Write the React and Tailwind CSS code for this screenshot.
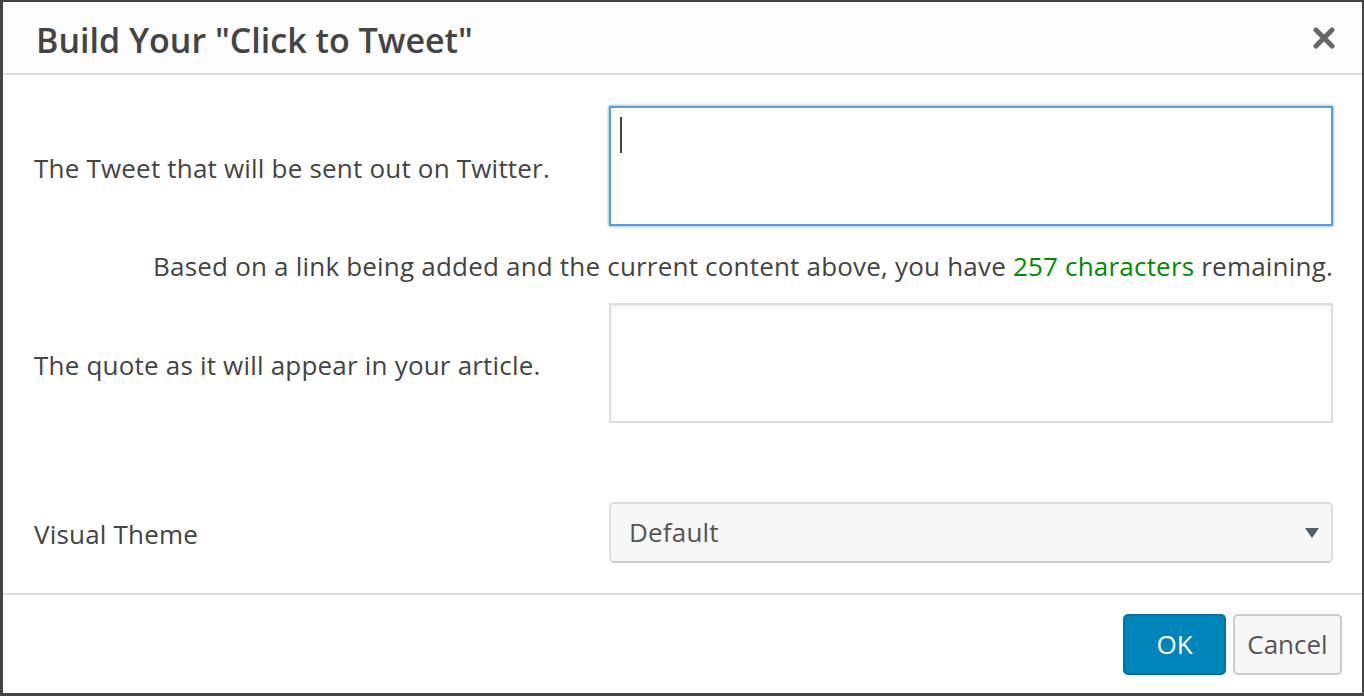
export default function App() {
  return (
    <div
      className="w-[1364px] h-[696px] bg-white flex flex-col border-[#444] border-l-[3px] border-t-2 border-r-2 border-b-[3px] text-[#444]"
      style={{ fontFamily: '"Open Sans", "Noto Sans", sans-serif' }}
    >
      {/* HEADER */}
      <div className="h-[73px] shrink-0 bg-[#fcfcfc] border-b-2 border-[#ddd] flex items-center justify-between pl-[33px] pr-[26px]">
        <h1 className="text-[34px] font-semibold leading-none mt-[4px]">
          Build Your "Click to Tweet"
        </h1>
        <button className="w-[24px] h-[24px] flex items-center justify-center">
          <svg width="22" height="22" viewBox="0 0 22 22">
            <path
              d="M3 3 L19 19 M19 3 L3 19"
              stroke="#666"
              strokeWidth="5"
              strokeLinecap="round"
            />
          </svg>
        </button>
      </div>

      {/* BODY */}
      <div className="flex-1 flex flex-col pt-[31px] pl-[31px] pr-[29px] text-[26px] tracking-[0.2px]">
        <div className="flex items-center">
          <div className="w-[575px] shrink-0 pt-[4px]">The Tweet that will be sent out on Twitter.</div>
          <div className="relative flex-1 h-[120px] border-2 border-[#5b9dd9] shadow-[0_0_3px_rgba(30,140,190,0.8)] bg-white">
            <div className="absolute left-[9px] top-[9px] w-[2px] h-[36px] bg-[#444]" />
          </div>
        </div>

        <div className="mt-[22px] text-right leading-[36px]">
          Based on a link being added and the current content above, you have{" "}
          <span className="text-[#008a00]">257 characters</span> remaining.
        </div>

        <div className="flex items-center mt-[19px]">
          <div className="w-[575px] shrink-0 pt-[5px]">The quote as it will appear in your article.</div>
          <div className="flex-1 h-[120px] border-2 border-[#ddd] shadow-[inset_0_2px_3px_rgba(0,0,0,0.07)] bg-white" />
        </div>

        <div className="flex items-center mt-[79px]">
          <div className="w-[575px] shrink-0 pt-[4px]">Visual Theme</div>
          <div className="flex-1 h-[61px] bg-[#f7f7f7] border-2 border-[#ddd] border-b-[#ccc] rounded-[5px] flex items-center justify-between pl-[18px] pr-[11px] text-[#555]">
            <span>Default</span>
            <svg width="16" height="12" viewBox="0 0 16 12">
              <path d="M1 1 L15 1 L8 11 Z" fill="#555d66" />
            </svg>
          </div>
        </div>
      </div>

      {/* FOOTER */}
      <div className="h-[100px] shrink-0 border-t-2 border-[#ddd] flex justify-end items-start gap-[7px] pt-[19px] pr-[20px] text-[26px]">
        <button className="w-[103px] h-[61px] rounded-[5px] bg-[#0085ba] border-2 border-[#0073aa] border-b-[#006799] text-white">
          OK
        </button>
        <button className="w-[109px] h-[61px] rounded-[5px] bg-[#f7f7f7] border-2 border-[#ccc] text-[#555]">
          Cancel
        </button>
      </div>
    </div>
  );
}
